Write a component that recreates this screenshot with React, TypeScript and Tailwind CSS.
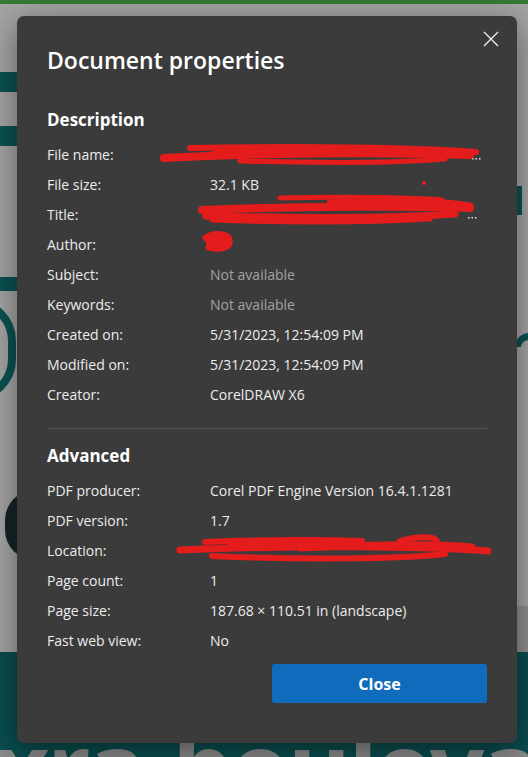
import React from 'react'

type Row = { label: string; value?: string; muted?: boolean }

const description: Row[] = [
  { label: 'File name:' },
  { label: 'File size:', value: '32.1 KB' },
  { label: 'Title:' },
  { label: 'Author:' },
  { label: 'Subject:', value: 'Not available', muted: true },
  { label: 'Keywords:', value: 'Not available', muted: true },
  { label: 'Created on:', value: '5/31/2023, 12:54:09 PM' },
  { label: 'Modified on:', value: '5/31/2023, 12:54:09 PM' },
  { label: 'Creator:', value: 'CorelDRAW X6' },
]

const advanced: Row[] = [
  { label: 'PDF producer:', value: 'Corel PDF Engine Version 16.4.1.1281' },
  { label: 'PDF version:', value: '1.7' },
  { label: 'Location:' },
  { label: 'Page count:', value: '1' },
  { label: 'Page size:', value: '187.68 × 110.51 in (landscape)' },
  { label: 'Fast web view:', value: 'No' },
]

const PropRow = ({ row }: { row: Row }) => (
  <div className="grid h-[30px] grid-cols-[163px_1fr] items-center text-[14px] text-[#ececec]">
    <span>{row.label}</span>
    <span className={row.muted ? 'text-[#a2a2a2]' : ''}>{row.value ?? ''}</span>
  </div>
)

// red marker strokes that hide the private values
const Scribbles = () => (
  <svg
    className="pointer-events-none absolute left-0 top-0"
    width="500"
    height="727"
    viewBox="17 16 500 727"
    fill="none"
  >
    <g fill="#e6e6e6">
      <rect x="472" y="158" width="1.5" height="1.5" />
      <rect x="475.5" y="158" width="1.5" height="1.5" />
      <rect x="479" y="158" width="1.5" height="1.5" />
      <rect x="468" y="217" width="1.5" height="1.5" />
      <rect x="471.5" y="217" width="1.5" height="1.5" />
      <rect x="475" y="217" width="1.5" height="1.5" />
    </g>
    <g stroke="#e41c1c" strokeLinecap="round">
      <path d="M164 158 C 250 153, 380 152, 470 155" strokeWidth="8" />
      <path d="M190 148 C 300 146, 420 147, 476 152" strokeWidth="6" />
      <path d="M215 153 C 300 150, 400 150, 460 152" strokeWidth="6" />
      <path d="M240 161 C 320 163, 400 163, 445 159" strokeWidth="5" />

      <path d="M280 198 C 350 196, 420 198, 442 200" strokeWidth="5" />
      <path d="M330 203 C 400 201, 450 202, 470 206" strokeWidth="7" />
      <path d="M202 210 C 300 206, 420 206, 470 208" strokeWidth="8" />
      <path d="M206 216 C 300 218, 400 218, 455 214" strokeWidth="7" />
      <path d="M212 220 C 300 223, 380 222, 430 219" strokeWidth="5" />

      <path d="M206 238 C 215 232, 230 234, 229 241 C 231 247, 220 250, 209 247" strokeWidth="7" />

      <path d="M180 550 C 300 545, 420 546, 488 551" strokeWidth="7" />
      <path d="M205 542 C 260 540, 330 540, 362 541" strokeWidth="6" />
      <path d="M400 541 C 420 535, 445 536, 434 546" strokeWidth="6" />
      <path d="M212 556 C 300 560, 400 559, 445 554" strokeWidth="6" />
      <path d="M300 548 C 380 544, 440 544, 472 547" strokeWidth="7" />
      <path d="M230 546 C 300 544, 360 544, 410 546" strokeWidth="6" />
    </g>
    <ellipse cx="218" cy="242" rx="12" ry="7" fill="#e41c1c" />
    <circle cx="424" cy="183" r="2" fill="#e41c1c" />
  </svg>
)

const Backdrop = () => (
  <>
    <div className="absolute left-0 top-0 h-[4px] w-full bg-[#357a35]" />
    <div className="absolute left-0 top-[72px] h-[20px] w-[24px] bg-[#0c5253]" />
    <div className="absolute left-0 top-[126px] h-[20px] w-[24px] bg-[#0c5253]" />
    <div className="absolute left-0 top-[277px] h-[14px] w-[24px] bg-[#0c5253]" />
    <div className="absolute left-[-70px] top-[298px] h-[104px] w-[86px] rounded-full border-[8px] border-[#0c5253]" />
    <div className="absolute left-[5px] top-[490px] h-[70px] w-[30px] rounded-l-full bg-[#152426]" />
    <div className="absolute right-[6px] top-[186px] h-[29px] w-[8px] bg-[#0c5253]" />
    <div className="absolute left-[515px] top-[333px] h-[14px] w-[40px] rounded-tl-[30px] border-l-[6px] border-t-[7px] border-[#0c5253]" />
    <div className="absolute right-0 top-[606px] h-[46px] w-[17px] bg-[#8e8e8e]" />
    <div className="absolute bottom-0 left-0 h-[105px] w-full overflow-hidden bg-[#0a4d4f]">
      <div className="absolute left-[-6px] top-[66px] whitespace-nowrap text-[96px] font-bold leading-none tracking-tight text-[#8c8c8c] [font-family:'Open_Sans',sans-serif]">
        xra-boulevard
      </div>
    </div>
  </>
)

export default function App() {
  return (
    <div className="relative h-[757px] w-[528px] overflow-hidden bg-[#a4a4a4] [font-family:'Open_Sans','Noto_Sans',sans-serif]">
      <Backdrop />
      <div className="relative z-10 pl-[17px] pt-[16px]">
        <div className="relative w-[500px] rounded-[7px] bg-[#3b3b3b] px-[30px] pb-[40px] pt-[28px] shadow-[0_8px_32px_rgba(0,0,0,0.45)]">
          <button className="absolute right-[18px] top-[15px] flex h-[16px] w-[16px] items-center justify-center text-[#f2f2f2]">
            <svg width="16" height="16" viewBox="0 0 16 16" fill="none">
              <path d="M1 1 L15 15 M15 1 L1 15" stroke="currentColor" strokeWidth="1.3" />
            </svg>
          </button>

          <h1 className="h-8 text-[23px] font-semibold leading-8 text-white">Document properties</h1>

          <h2 className="mt-8 h-6 text-[17px] font-bold leading-6 text-white">Description</h2>
          <div className="mt-[7px]">
            {description.map((r) => (
              <PropRow key={r.label} row={r} />
            ))}
          </div>

          <div className="mt-[19px] h-px bg-[#555555]" />

          <h2 className="mt-[15px] h-6 text-[17px] font-bold leading-6 text-white">Advanced</h2>
          <div className="mt-[7px]">
            {advanced.map((r) => (
              <PropRow key={r.label} row={r} />
            ))}
          </div>

          <div className="mt-[9px] flex justify-end">
            <button className="h-[39px] w-[215px] rounded-[3px] bg-[#0f6cbd] text-[16px] font-bold text-white">
              Close
            </button>
          </div>

          <Scribbles />
        </div>
      </div>
    </div>
  )
}
